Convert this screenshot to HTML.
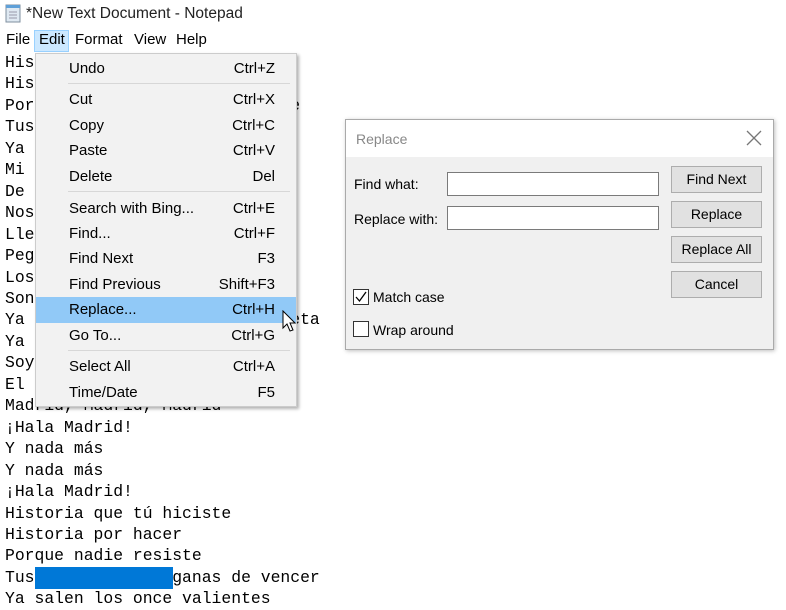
<!DOCTYPE html>
<html><head><meta charset="utf-8"><style>
*{margin:0;padding:0;box-sizing:border-box}
body{width:786px;height:594px;overflow:hidden;background:#fff;position:relative;font-family:"Liberation Sans",sans-serif;color:#000}
.abs{position:absolute}
.title{left:26px;top:5px;font-size:15.5px;color:#222}
.mb{top:31px;font-size:15px}
.txt{left:5px;top:52px;font-family:"Liberation Mono",monospace;font-size:16.4px;line-height:21.45px;white-space:pre}
.menu{left:35px;top:53px;width:262px;height:354px;background:#f2f2f2;border:1px solid #ccc;box-shadow:2px 2px 3px rgba(0,0,0,.3)}
.it{position:absolute;left:0;width:260px;height:26px;font-size:15px;line-height:26px}
.it span{position:absolute;left:33px}
.it b{position:absolute;right:21px;font-weight:normal}
.sep{position:absolute;left:32px;width:222px;height:1px;background:#d7d7d7}
.dlg{left:345px;top:119px;width:429px;height:231px;background:#f0f0f0;border:1px solid #aaa;box-shadow:1px 1px 4px rgba(0,0,0,.25);font-size:14px}
.inp{position:absolute;background:#fff;border:1px solid #7a7a7a;width:212px;height:24px;left:101px}
.btn{position:absolute;left:325px;width:91px;height:27px;background:#e1e1e1;border:1px solid #adadad;text-align:center;line-height:25px;font-size:14px}
.cb{position:absolute;left:7px;width:16px;height:16px;background:#fff;border:1px solid #333}
</style></head><body>
<svg class="abs" style="left:4px;top:4px" width="20" height="20"><rect x="2" y="1" width="14" height="17" fill="#dfe9f2" stroke="#7f8f9f"/><rect x="2" y="1" width="14" height="3" fill="#5fa0d8"/><line x1="5" y1="8" x2="13" y2="8" stroke="#99a"/><line x1="5" y1="11" x2="13" y2="11" stroke="#99a"/><line x1="5" y1="14" x2="13" y2="14" stroke="#99a"/></svg>
<div class="abs title">*New Text Document - Notepad</div>
<div class="abs" style="left:34px;top:30px;width:35px;height:22px;background:#cce8ff;border:1px solid #99d1ff"></div>
<div class="abs mb" style="left:6px">File</div>
<div class="abs mb" style="left:39px">Edit</div>
<div class="abs mb" style="left:75px">Format</div>
<div class="abs mb" style="left:134px">View</div>
<div class="abs mb" style="left:176px">Help</div>
<div class="abs txt">Historia que tú hiciste
Historia por hacer
Porque nadie resiste tus ganse
Tus ganas de vencer
Ya salen los once
Mi corazón
De la Castellana
Nos vamos
Llevamos
Pegado
Los
Son
Ya salen los once de la camiseta
Ya
Soy
El
Madrid, Madrid, Madrid
¡Hala Madrid!
Y nada más
Y nada más
¡Hala Madrid!
Historia que tú hiciste
Historia por hacer
Porque nadie resiste
Tus              ganas de vencer
Ya salen los once valientes</div>
<div class="abs" style="left:35px;top:567px;width:138px;height:22px;background:#0078d7"></div>
<div class="abs menu">
<div class="it" style="top:2px"><span>Undo</span><b>Ctrl+Z</b></div>
<div class="sep" style="top:29px"></div>
<div class="it" style="top:33px"><span>Cut</span><b>Ctrl+X</b></div>
<div class="it" style="top:59px"><span>Copy</span><b>Ctrl+C</b></div>
<div class="it" style="top:84px"><span>Paste</span><b>Ctrl+V</b></div>
<div class="it" style="top:110px"><span>Delete</span><b>Del</b></div>
<div class="sep" style="top:137px"></div>
<div class="it" style="top:142px"><span>Search with Bing...</span><b>Ctrl+E</b></div>
<div class="it" style="top:167px"><span>Find...</span><b>Ctrl+F</b></div>
<div class="it" style="top:192px"><span>Find Next</span><b>F3</b></div>
<div class="it" style="top:218px"><span>Find Previous</span><b>Shift+F3</b></div>
<div class="it" style="top:243px;background:#91c9f7"><span>Replace...</span><b>Ctrl+H</b></div>
<div class="it" style="top:269px"><span>Go To...</span><b>Ctrl+G</b></div>
<div class="sep" style="top:296px"></div>
<div class="it" style="top:300px"><span>Select All</span><b>Ctrl+A</b></div>
<div class="it" style="top:326px"><span>Time/Date</span><b>F5</b></div>
</div>
<svg class="abs" style="left:282px;top:310px" width="16" height="24"><path d="M1 1 L1 18 L5 14 L8 21 L11 20 L8 13 L13 13 Z" fill="#fff" stroke="#000"/></svg>
<div class="abs dlg">
<div class="abs" style="left:0;top:0;width:427px;height:37px;background:#fff"></div>
<div class="abs" style="left:10px;top:11px;font-size:14px;color:#888">Replace</div>
<svg class="abs" style="left:400px;top:10px" width="16" height="16"><path d="M1 1L15 15M15 1L1 15" stroke="#777" stroke-width="1.3"/></svg>
<div class="abs" style="left:8px;top:56px">Find what:</div>
<div class="abs" style="left:8px;top:91px">Replace with:</div>
<div class="inp" style="top:52px"></div>
<div class="inp" style="top:86px"></div>
<div class="btn" style="top:46px">Find Next</div>
<div class="btn" style="top:81px">Replace</div>
<div class="btn" style="top:116px">Replace All</div>
<div class="btn" style="top:151px">Cancel</div>
<div class="cb" style="top:169px"><svg width="14" height="14" style="position:absolute;left:0;top:0"><path d="M2 7L5.5 11L12 2" stroke="#000" stroke-width="1.3" fill="none"/></svg></div>
<div class="abs" style="left:27px;top:169px">Match case</div>
<div class="cb" style="top:201px"></div>
<div class="abs" style="left:27px;top:202px">Wrap around</div>
</div>
</body></html>
